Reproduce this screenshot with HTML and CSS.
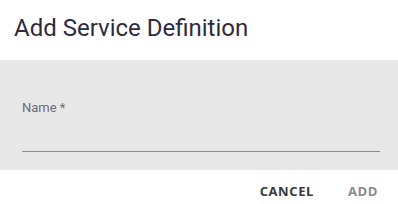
FILE: index.html
```html
<!DOCTYPE html>
<html>
<head>
<meta charset="utf-8">
<link rel="stylesheet" href="styles.css">
</head>
<body>
<div class="dialog">
  <h2 class="title">Add Service Definition</h2>
  <div class="content">
    <label class="field">
      <span class="label">Name *</span>
      <span class="input"></span>
    </label>
  </div>
  <div class="actions">
    <button class="btn btn-cancel">CANCEL</button>
    <button class="btn btn-add">ADD</button>
  </div>
</div>
</body>
</html>
```
FILE: styles.css
```css
html, body {
  margin: 0;
  padding: 0;
  background: #ffffff;
}
.dialog {
  width: 398px;
  height: 204px;
  font-family: Roboto, "Liberation Sans", sans-serif;
}
.title {
  margin: 0;
  height: 60px;
  box-sizing: border-box;
  padding: 13px 0 0 14px;
  font-size: 24px;
  font-weight: 400;
  color: #2e2b3f;
  line-height: 30px;
}
.content {
  background: #e8e8e8;
  height: 110px;
  box-sizing: border-box;
  padding: 39px 18px 0 22px;
}
.field {
  display: flex;
  flex-direction: column;
}
.label {
  font-size: 13px;
  line-height: 17px;
  color: #6c6b78;
}
.input {
  height: 35px;
  border-bottom: 1px solid #8d8c96;
}
.actions {
  display: flex;
  justify-content: flex-end;
  gap: 34px;
  padding: 12px 20px 0 0;
}
.btn {
  border: none;
  background: none;
  padding: 0;
  font-family: "Open Sans", sans-serif;
  font-weight: 700;
  font-size: 13px;
  letter-spacing: 0.6px;
  line-height: 18px;
}
.btn-cancel { color: #3a3a3a; }
.btn-add { color: #8a8a8a; }
```
